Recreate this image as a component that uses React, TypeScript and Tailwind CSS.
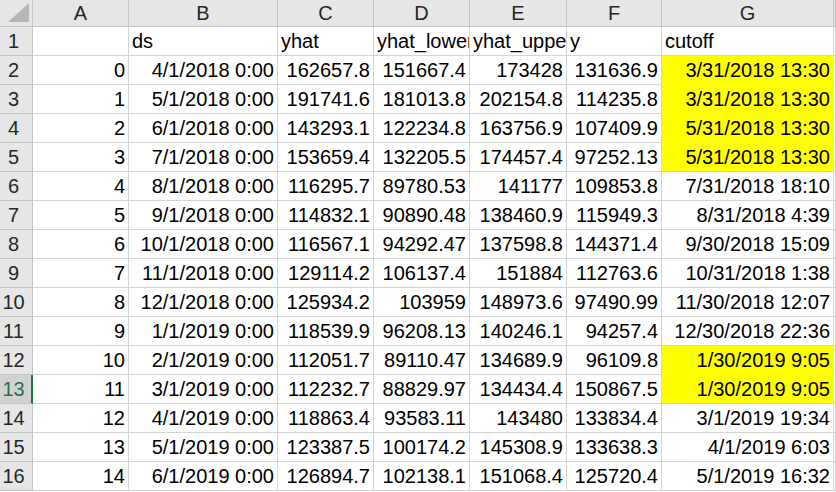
const font = { fontFamily: '"Liberation Sans", Arial, sans-serif' };

type Row = [string, string, string, string, string, string, string, boolean];

const rows: Row[] = [
	["0", "4/1/2018 0:00", "162657.8", "151667.4", "173428", "131636.9", "3/31/2018 13:30", true],
	["1", "5/1/2018 0:00", "191741.6", "181013.8", "202154.8", "114235.8", "3/31/2018 13:30", true],
	["2", "6/1/2018 0:00", "143293.1", "122234.8", "163756.9", "107409.9", "5/31/2018 13:30", true],
	["3", "7/1/2018 0:00", "153659.4", "132205.5", "174457.4", "97252.13", "5/31/2018 13:30", true],
	["4", "8/1/2018 0:00", "116295.7", "89780.53", "141177", "109853.8", "7/31/2018 18:10", false],
	["5", "9/1/2018 0:00", "114832.1", "90890.48", "138460.9", "115949.3", "8/31/2018 4:39", false],
	["6", "10/1/2018 0:00", "116567.1", "94292.47", "137598.8", "144371.4", "9/30/2018 15:09", false],
	["7", "11/1/2018 0:00", "129114.2", "106137.4", "151884", "112763.6", "10/31/2018 1:38", false],
	["8", "12/1/2018 0:00", "125934.2", "103959", "148973.6", "97490.99", "11/30/2018 12:07", false],
	["9", "1/1/2019 0:00", "118539.9", "96208.13", "140246.1", "94257.4", "12/30/2018 22:36", false],
	["10", "2/1/2019 0:00", "112051.7", "89110.47", "134689.9", "96109.8", "1/30/2019 9:05", true],
	["11", "3/1/2019 0:00", "112232.7", "88829.97", "134434.4", "150867.5", "1/30/2019 9:05", true],
	["12", "4/1/2019 0:00", "118863.4", "93583.11", "143480", "133834.4", "3/1/2019 19:34", false],
	["13", "5/1/2019 0:00", "123387.5", "100174.2", "145308.9", "133638.3", "4/1/2019 6:03", false],
	["14", "6/1/2019 0:00", "126894.7", "102138.1", "151068.4", "125720.4", "5/1/2019 16:32", false],
];

const cols = "grid grid-cols-[33px_96px_149px_96px_96px_97px_95px_172px_1fr]";
const cell = "h-[29px] border-r border-b border-[#d4d4d4] overflow-hidden whitespace-nowrap leading-[28px] text-black";
const headCell = "h-[27px] border-r border-b border-[#c3c3c3] bg-[#e6e6e6] text-center leading-[26px] text-[#262626]";

function Corner() {
	return (
		<div className="h-[27px] border-r border-b border-[#c3c3c3] bg-[#e6e6e6]">
			<svg width="32" height="26" viewBox="0 0 32 26">
				<polygon points="8,22 29,22 29,3" fill="#b7b7b7" />
			</svg>
		</div>
	);
}

function RowHead({ n, active }: { n: number; active?: boolean }) {
	return (
		<div
			className={
				active
					? "h-[29px] border-r-2 border-b border-r-[#217346] border-b-[#c3c3c3] bg-[#d2d2d2] pr-[4px] text-center leading-[28px] text-[#217346]"
					: "h-[29px] border-r border-b border-[#c3c3c3] bg-[#e6e6e6] pr-[5px] text-center leading-[28px] text-[#262626]"
			}
		>
			{n}
		</div>
	);
}

export default function App() {
	return (
		<div className="h-[492px] w-[836px] overflow-hidden bg-white text-[20px]" style={font}>
			<div className={cols}>
				<Corner />
				{["A", "B", "C", "D", "E", "F", "G", ""].map((c, i) => (
					<div key={i} className={headCell}>
						{c}
					</div>
				))}

				<RowHead n={1} />
				<div className={cell} />
				{["ds", "yhat", "yhat_lower", "yhat_upper", "y", "cutoff"].map((h) => (
					<div key={h} className={`${cell} pl-[3px]`}>
						{h}
					</div>
				))}
				<div className={cell} />

				{rows.map((r, i) => {
					const nextYellow = rows[i + 1]?.[7];
					return (
						<div key={i} className="contents">
							<RowHead n={i + 2} active={i + 2 === 13} />
							{r.slice(0, 6).map((v, j) => (
								<div key={j} className={`${cell} pr-[3px] text-right`}>
									{v}
								</div>
							))}
							<div
								className={
									r[7]
										? `${cell} pr-[3px] text-right bg-[#ffff00] border-r-[#ffff00] ${nextYellow ? "border-b-[#ffff00]" : ""}`
										: `${cell} pr-[3px] text-right`
								}
							>
								{r[6]}
							</div>
							<div className={cell} />
						</div>
					);
				})}
			</div>
		</div>
	);
}
